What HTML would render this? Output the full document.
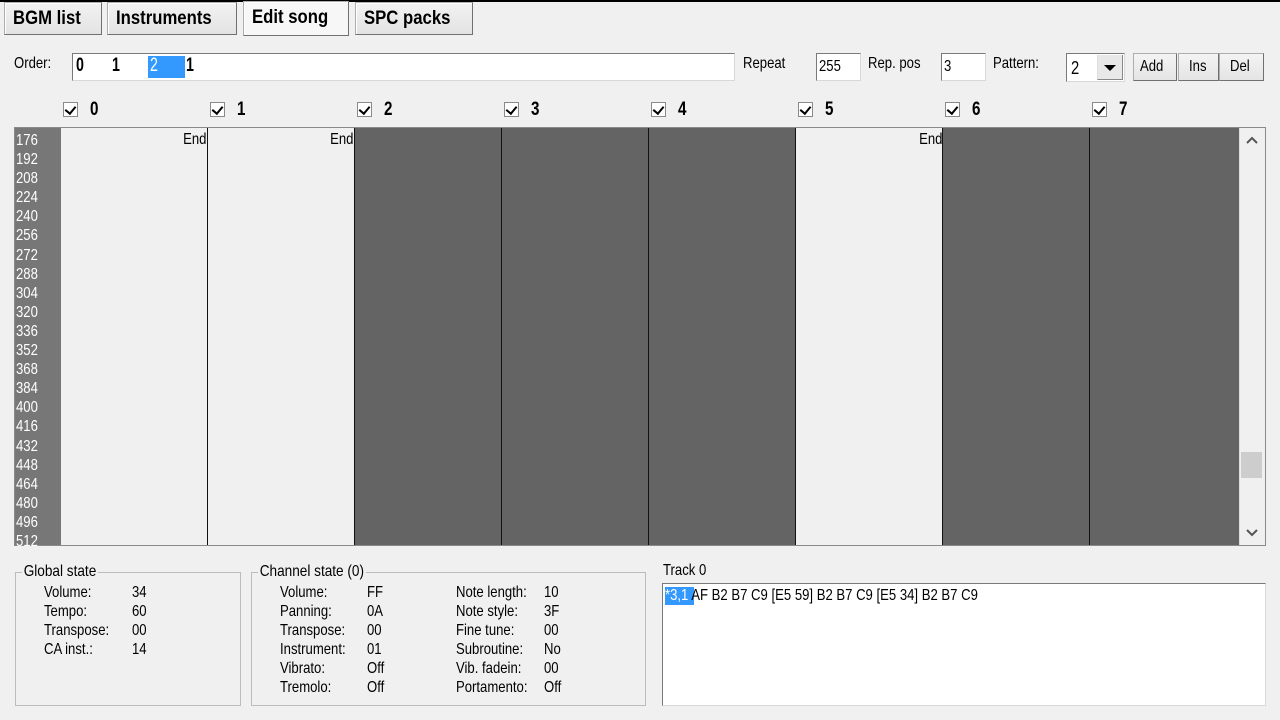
<!DOCTYPE html>
<html><head><meta charset="utf-8"><style>
*{margin:0;padding:0;box-sizing:border-box}
body{width:1280px;height:720px;background:#f0f0f0;position:relative;overflow:hidden;font-family:"Liberation Sans",sans-serif;color:#000}
.a{position:absolute}
.t{position:absolute;font-size:16px;line-height:18px;white-space:nowrap;transform:scaleX(.82);transform-origin:0 0}
.tab{position:absolute;top:2px;height:33px;border:1px solid #adadad;border-right-color:#707070;border-bottom-color:#707070;background:linear-gradient(#f2f2f2,#e3e3e3);box-shadow:inset 1px 1px #fff}
.tab span{position:absolute;top:5px;left:8px;font-size:19px;font-weight:bold;transform:scaleX(.88);transform-origin:0 0;white-space:nowrap}
.box{position:absolute;background:#fff;border:1px solid #7a7a7a;border-right-color:#d8d8d8;border-bottom-color:#d8d8d8}
.btn{position:absolute;top:53px;height:28px;border:1px solid #adadad;border-right-color:#707070;border-bottom-color:#707070;background:linear-gradient(#f4f4f4,#e4e4e4)}
.cb{position:absolute;top:102px;width:15px;height:15px;border:1px solid #8a8a8a;background:#fff}
.cb:after{content:"";position:absolute;left:3px;top:1px;width:5px;height:8px;border:solid #000;border-width:0 2px 2px 0;transform:rotate(40deg)}
.cl{position:absolute;top:99px;font-size:19px;font-weight:bold;transform:scaleX(.8);transform-origin:0 0}
.col{position:absolute;top:128px;height:417px;width:147px;border-right:1px solid #111}
.end{position:absolute;top:131px;font-size:16px;transform:scaleX(.82);transform-origin:100% 0}
.num{position:absolute;left:16px;color:#fff;font-size:16px;line-height:19.1px;transform:scaleX(.82);transform-origin:0 0}
.grp{position:absolute;border:1px solid #bcbcbc}
.grp>b{position:absolute;top:-10px;left:6px;background:#f0f0f0;font-weight:normal;font-size:16px;padding:0 2px;transform:scaleX(.85);transform-origin:0 0;white-space:nowrap}
.kv{position:absolute;font-size:16px;line-height:19px;transform:scaleX(.82);transform-origin:0 0;white-space:nowrap}
</style></head><body>
<div class="a" style="left:0;top:0;width:1280px;height:2px;background:#000"></div>
<div class="tab" style="left:4px;width:98px"><span>BGM list</span></div>
<div class="tab" style="left:107px;width:130px"><span>Instruments</span></div>
<div class="tab" style="left:243px;width:106px;top:1px;height:35px;background:#f7f7f7"><span>Edit song</span></div>
<div class="tab" style="left:355px;width:118px"><span>SPC packs</span></div>

<div class="t" style="left:14px;top:55px">Order:</div>
<div class="box" style="left:72px;top:53px;width:663px;height:28px"></div>
<div class="a" style="left:148px;top:56px;width:37px;height:22px;background:#3399ff"></div>
<div class="t" style="left:76px;top:57px;font-size:19px;font-weight:bold;transform:scaleX(.75)">0</div>
<div class="t" style="left:112px;top:57px;font-size:19px;font-weight:bold;transform:scaleX(.75)">1</div>
<div class="t" style="left:150px;top:57px;font-size:19px;color:#fff;transform:scaleX(.75)">2</div>
<div class="t" style="left:186px;top:57px;font-size:19px;font-weight:bold;transform:scaleX(.75)">1</div>

<div class="t" style="left:743px;top:55px">Repeat</div>
<div class="box" style="left:816px;top:53px;width:45px;height:28px"></div>
<div class="t" style="left:819px;top:58px">255</div>
<div class="t" style="left:868px;top:55px">Rep. pos</div>
<div class="box" style="left:941px;top:53px;width:45px;height:28px"></div>
<div class="t" style="left:944px;top:58px">3</div>
<div class="t" style="left:993px;top:55px">Pattern:</div>
<div class="box" style="left:1066px;top:53px;width:59px;height:29px"></div>
<div class="t" style="left:1071px;top:59px;font-size:18px">2</div>
<div class="a" style="left:1097px;top:55px;width:26px;height:25px;background:#e8e8e8;border-left:1px solid #ddd;border-bottom:1px solid #888;border-right:1px solid #888"></div>
<div class="a" style="left:1104px;top:65px;width:0;height:0;border-left:6px solid transparent;border-right:6px solid transparent;border-top:6px solid #000"></div>
<div class="btn" style="left:1133px;width:44px"><div class="t" style="left:6px;top:4px">Add</div></div>
<div class="btn" style="left:1178px;width:41px"><div class="t" style="left:10px;top:4px">Ins</div></div>
<div class="btn" style="left:1219px;width:45px"><div class="t" style="left:10px;top:4px">Del</div></div>

<div class="cb" style="left:63px"></div><div class="cl" style="left:90px">0</div>
<div class="cb" style="left:210px"></div><div class="cl" style="left:237px">1</div>
<div class="cb" style="left:357px"></div><div class="cl" style="left:384px">2</div>
<div class="cb" style="left:504px"></div><div class="cl" style="left:531px">3</div>
<div class="cb" style="left:651px"></div><div class="cl" style="left:678px">4</div>
<div class="cb" style="left:798px"></div><div class="cl" style="left:825px">5</div>
<div class="cb" style="left:945px"></div><div class="cl" style="left:972px">6</div>
<div class="cb" style="left:1092px"></div><div class="cl" style="left:1119px">7</div>

<div class="a" style="left:14px;top:127px;width:1252px;height:419px;border:1px solid #8a8a8a;background:#646464"></div>
<div class="a" style="left:15px;top:128px;width:46px;height:417px;background:#777"></div>
<div class="num" style="top:131px">176<br>192<br>208<br>224<br>240<br>256<br>272<br>288<br>304<br>320<br>336<br>352<br>368<br>384<br>400<br>416<br>432<br>448<br>464<br>480<br>496<br>512</div>
<div class="col" style="left:61px;background:#f0f0f0"></div>
<div class="col" style="left:208px;background:#f0f0f0"></div>
<div class="col" style="left:355px"></div>
<div class="col" style="left:502px"></div>
<div class="col" style="left:649px"></div>
<div class="col" style="left:796px;background:#f0f0f0"></div>
<div class="col" style="left:943px"></div>
<div class="col" style="left:1090px;width:149px;border-right:0"></div>
<div class="end" style="right:1074px">End</div>
<div class="end" style="right:927px">End</div>
<div class="end" style="right:338px">End</div>
<div class="a" style="left:1239px;top:128px;width:26px;height:417px;background:#f0f0f0;border-left:1px solid #ddd"></div>
<div class="a" style="left:1241px;top:452px;width:21px;height:26px;background:#cdcdcd"></div>
<svg class="a" style="left:1245px;top:135px" width="14" height="10"><path d="M2 8 L7 3 L12 8" fill="none" stroke="#555" stroke-width="2"/></svg>
<svg class="a" style="left:1245px;top:528px" width="14" height="10"><path d="M2 2 L7 7 L12 2" fill="none" stroke="#555" stroke-width="2"/></svg>

<div class="grp" style="left:15px;top:572px;width:226px;height:134px"><b>Global state</b></div>
<div class="kv" style="left:44px;top:583px">Volume:<br>Tempo:<br>Transpose:<br>CA inst.:</div>
<div class="kv" style="left:132px;top:583px">34<br>60<br>00<br>14</div>

<div class="grp" style="left:251px;top:572px;width:395px;height:134px"><b>Channel state (0)</b></div>
<div class="kv" style="left:280px;top:583px">Volume:<br>Panning:<br>Transpose:<br>Instrument:<br>Vibrato:<br>Tremolo:</div>
<div class="kv" style="left:367px;top:583px">FF<br>0A<br>00<br>01<br>Off<br>Off</div>
<div class="kv" style="left:456px;top:583px">Note length:<br>Note style:<br>Fine tune:<br>Subroutine:<br>Vib. fadein:<br>Portamento:</div>
<div class="kv" style="left:544px;top:583px">10<br>3F<br>00<br>No<br>00<br>Off</div>

<div class="t" style="left:663px;top:562px">Track 0</div>
<div class="box" style="left:662px;top:583px;width:604px;height:123px"></div>
<div class="a" style="left:665px;top:587px;width:29px;height:18px;background:#3399ff"></div>
<div class="t" style="left:665px;top:587px"><span style="color:#fff">*3,1</span> AF B2 B7 C9 [E5 59] B2 B7 C9 [E5 34] B2 B7 C9</div>
</body></html>
